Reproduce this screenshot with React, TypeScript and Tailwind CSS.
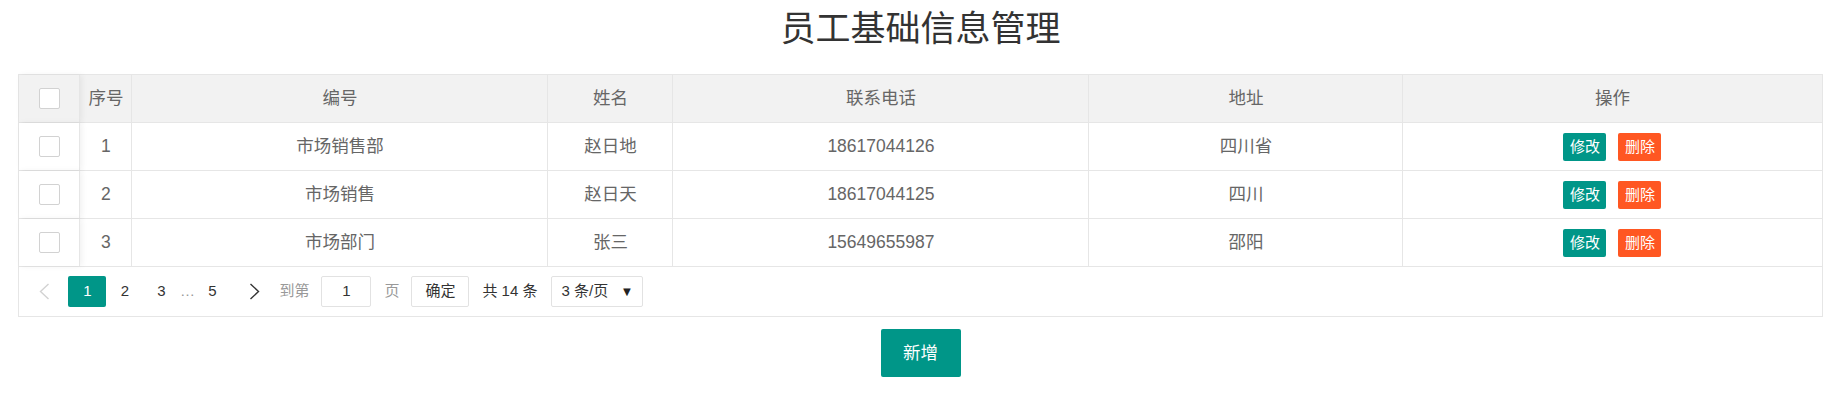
import React from "react";

const rows = [
  { id: 1, code: "市场销售部", name: "赵日地", phone: "18617044126", addr: "四川省" },
  { id: 2, code: "市场销售", name: "赵日天", phone: "18617044125", addr: "四川" },
  { id: 3, code: "市场部门", name: "张三", phone: "15649655987", addr: "邵阳" },
];

const font = "font-['Liberation_Sans','Noto_Sans_CJK_SC',sans-serif]";
const cols = "grid grid-cols-[61px_52px_416px_125px_416px_314px_1fr]";
const cell = "flex items-center justify-center border-r border-[#e6e6e6] h-[47px]";

function Box() {
  return <span className="block w-[21px] h-[21px] rounded-[2px] border border-[#d2d2d2] bg-white" />;
}

function Chevron({ dir, color }: { dir: "l" | "r"; color: string }) {
  return (
    <svg width="11" height="17" viewBox="0 0 11 17" fill="none">
      <polyline
        points={dir === "l" ? "9.5,1 1.5,8.5 9.5,16" : "1.5,1 9.5,8.5 1.5,16"}
        stroke={color}
        strokeWidth="1.4"
      />
    </svg>
  );
}

export default function App() {
  return (
    <div className={`${font} w-[1841px] min-h-[403px] bg-white text-[#666]`}>
      <div className="h-[74px] pt-[11px] text-center text-[35px] leading-[36px] text-[#333]">员工基础信息管理</div>

      <div className="w-[98%] mx-auto border border-[#e6e6e6]">
        {/* header */}
        <div className={`${cols} bg-[#f2f2f2] border-b border-[#e6e6e6] text-[17.5px]`}>
          <div className={`${cell} relative z-10 shadow-[2px_0_6px_rgba(0,0,0,0.06)]`}><Box /></div>
          <div className={cell}>序号</div>
          <div className={cell}>编号</div>
          <div className={cell}>姓名</div>
          <div className={cell}>联系电话</div>
          <div className={cell}>地址</div>
          <div className={`${cell} border-r-0`}>操作</div>
        </div>

        {rows.map((r) => (
          <div key={r.id} className={`${cols} border-b border-[#e6e6e6] text-[17.5px]`}>
            <div className={`${cell} relative z-10 bg-white shadow-[2px_0_6px_rgba(0,0,0,0.06)]`}><Box /></div>
            <div className={cell}>{r.id}</div>
            <div className={cell}>{r.code}</div>
            <div className={cell}>{r.name}</div>
            <div className={cell}>{r.phone}</div>
            <div className={cell}>{r.addr}</div>
            <div className={`${cell} border-r-0 gap-[12px]`}>
              <button className="w-[43px] h-[28px] rounded-[2px] bg-[#009688] text-white text-[15px] leading-[28px]">修改</button>
              <button className="w-[43px] h-[28px] rounded-[2px] bg-[#ff5722] text-white text-[15px] leading-[28px]">删除</button>
            </div>
          </div>
        ))}

        {/* pagination */}
        <div className="h-[49px] flex items-center pl-[6px] text-[15px] text-[#333]">
          <span className="w-[43px] flex justify-center pr-[5px]"><Chevron dir="l" color="#d2d2d2" /></span>
          <span className="w-[38px] h-[31px] rounded-[2px] bg-[#009688] text-white flex items-center justify-center">1</span>
          <span className="w-[37px] text-center">2</span>
          <span className="w-[36px] text-center">3</span>
          <span className="w-[16px] text-center text-[#999]">…</span>
          <span className="w-[34px] text-center">5</span>
          <span className="w-[50px] flex justify-center"><Chevron dir="r" color="#333" /></span>
          <span className="text-[#999]">到第</span>
          <span className="ml-[12px] w-[50px] h-[31px] border border-[#e2e2e2] rounded-[2px] flex items-center justify-center">1</span>
          <span className="ml-[13px] text-[#999]">页</span>
          <span className="ml-[12px] w-[58px] h-[31px] border border-[#e2e2e2] rounded-[2px] flex items-center justify-center">确定</span>
          <span className="ml-[13px]">共 14 条</span>
          <span className="ml-[14px] w-[92px] h-[31px] border border-[#e2e2e2] rounded-[2px] flex items-center justify-between pl-[9px] pr-[9px]">
            <span>3 条/页</span>
            <span className="text-[13px] text-[#222]">▼</span>
          </span>
        </div>
      </div>

      <div className="flex justify-center mt-[12px]">
        <button className="w-[80px] h-[48px] rounded-[2px] bg-[#009688] text-white text-[17.5px]">新增</button>
      </div>
    </div>
  );
}
